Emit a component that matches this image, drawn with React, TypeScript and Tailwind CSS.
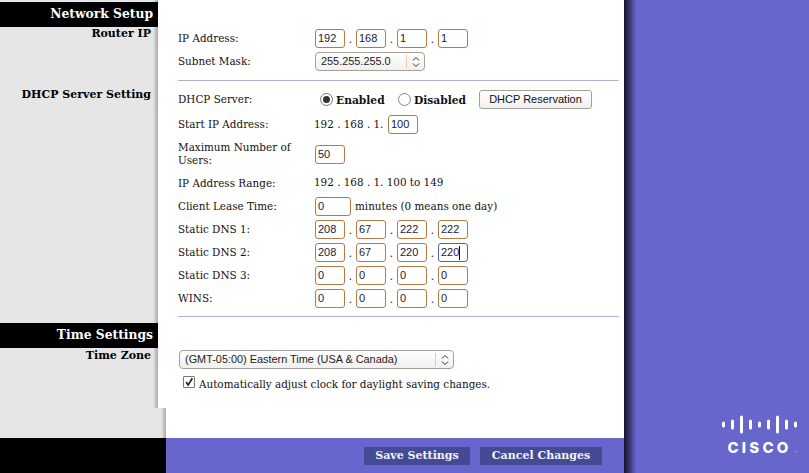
const serif = "font-['DejaVu_Serif',serif]";

function Ip({ v, focus, w = "w-[30px]" }: { v: string; focus?: boolean; w?: string }) {
  return (
    <span
      className={`relative flex h-[19px] ${w} shrink-0 items-center rounded-[3px] border bg-white pl-[2px] font-['Liberation_Sans',sans-serif] text-[11px] text-[#1a1a3a] ${focus ? "border-[#4a6a9c]" : "border-[#b87a45]"}`}
    >
      {v}
      {focus && <span className="h-[14px] w-px bg-black" />}
    </span>
  );
}

function Quad({ vals, focusLast }: { vals: string[]; focusLast?: boolean }) {
  return (
    <div className="flex items-center">
      {vals.map((v, i) => (
        <div key={i} className="flex items-center">
          {i > 0 && <span className="w-[11px] pt-[3px] text-center">.</span>}
          <Ip v={v} focus={focusLast && i === 3} />
        </div>
      ))}
    </div>
  );
}

function Row({ label, h = "h-[23px]", children }: { label: React.ReactNode; h?: string; children?: React.ReactNode }) {
  return (
    <div className={`flex ${h} items-center`}>
      <div className="w-[136px] shrink-0 pr-[12px] leading-[13px]">{label}</div>
      <div className="flex items-center pl-px">{children}</div>
    </div>
  );
}

function Chevrons() {
  return (
    <svg width="8" height="12" viewBox="0 0 8 12" fill="none" stroke="#333" strokeWidth="1">
      <path d="M1 4.5 4 1.5 7 4.5M1 7.5 4 10.5 7 7.5" />
    </svg>
  );
}

function Select({ text, w, textW }: { text: string; w: string; textW: string }) {
  return (
    <div className={`flex h-[19px] ${w} items-center rounded-[4px] border border-[#a89f97] bg-gradient-to-b from-white to-[#f0f0f0] font-['Liberation_Sans',sans-serif] text-[10.9px] text-[#222]`}>
      <span className={`${textW} shrink-0 pl-[5px] whitespace-nowrap`}>{text}</span>
      <span className="h-[13px] w-px bg-[#f2c9a0]" />
      <span className="flex flex-1 justify-center">
        <Chevrons />
      </span>
    </div>
  );
}

function SectionHead({ text }: { text: string }) {
  return (
    <div className="flex h-[25px] items-center justify-end bg-black pr-[5px] text-[12.3px] font-bold text-white">
      {text}
    </div>
  );
}

function SubHead({ text, className = "" }: { text: string; className?: string }) {
  return <div className={`pr-[7px] text-right text-[11px] font-bold leading-[13px] text-black ${className}`}>{text}</div>;
}

function Btn({ text, w }: { text: string; w: string }) {
  return (
    <div className={`flex h-[18px] ${w} items-center justify-center bg-[#444a94] text-[11px] font-bold text-[#f2f2f8]`}>
      {text}
    </div>
  );
}

function Cisco() {
  const bars = [
    [0, 6],
    [9, 10],
    [18, 18],
    [27, 10],
    [36, 6],
    [45, 10],
    [54, 18],
    [63, 10],
    [72, 6],
  ];
  return (
    <div className="flex flex-col items-center">
      <svg width="75" height="19" viewBox="0 0 75 19" fill="#fff">
        {bars.map(([x, h]) => (
          <rect key={x} x={x} y={(19 - h) / 2} width="3" height={h} rx="1.5" />
        ))}
      </svg>
      <div className="relative mt-[8px] font-['Inter',sans-serif] text-[15px] leading-[11px] font-extrabold tracking-[3.2px] text-white">
        CISCO
        <span className="absolute right-[-5px] bottom-[1px] h-px w-px bg-[#c8c8ee]" />
      </div>
    </div>
  );
}

export default function App() {
  return (
    <div className={`flex h-[473px] w-[809px] overflow-hidden bg-[#6666cc] ${serif} text-[10.4px] text-[#111]`}>
      <div className="flex w-[624px] shrink-0 flex-col">
        <div className="flex h-[408px] shrink-0">
          <div className="relative w-[158px] shrink-0 bg-[#e6e6e6] pt-[2px]">
            <div className="absolute top-0 right-0 bottom-0 w-[5px] bg-gradient-to-r from-transparent to-[#a8a8a8]" />
            <div className="relative">
              <SectionHead text="Network Setup" />
              <SubHead text="Router IP" />
              <SubHead text="DHCP Server Setting" className="mt-[48px]" />
              <div className="mt-[222px]">
                <SectionHead text="Time Settings" />
              </div>
              <SubHead text="Time Zone" className="pt-px" />
            </div>
          </div>
          <div className="min-w-0 flex-1 bg-white pt-[27px] pr-[5px] pl-[20px]">
            <Row label="IP Address:">
              <Quad vals={["192", "168", "1", "1"]} />
            </Row>
            <Row label="Subnet Mask:">
              <Select text="255.255.255.0" w="w-[110px]" textW="w-[90px]" />
            </Row>
            <div className="mt-[7px] mb-[6px] h-px w-[441px] bg-[#b3b3d9]" />
            <Row label="DHCP Server:" h="h-[25px]">
              <div className="flex items-center">
                <span className="ml-[5px] flex h-[13px] w-[13px] items-center justify-center rounded-full border border-[#777] bg-white">
                  <span className="h-[7px] w-[7px] rounded-full bg-[#333]" />
                </span>
                <span className="ml-[3px] w-[49px] pt-[3px] text-[10.7px] font-bold">Enabled</span>
                <span className="ml-[13px] h-[13px] w-[13px] rounded-full border border-[#888] bg-white" />
                <span className="ml-[3px] w-[51px] pt-[3px] text-[10.7px] font-bold">Disabled</span>
                <span className="ml-[14px] flex h-[19px] w-[113px] items-center justify-center rounded-[3px] border border-[#a89f97] bg-gradient-to-b from-white to-[#f0f0f0] font-['Liberation_Sans',sans-serif] text-[11px]">
                  DHCP Reservation
                </span>
              </div>
            </Row>
            <Row label="Start IP Address:" h="h-[25px]">
              <span className="-ml-px mr-[4px] w-[70px] whitespace-nowrap">192 . 168 . 1.</span>
              <Ip v="100" />
            </Row>
            <Row label="Maximum Number of Users:" h="h-[34px]">
              <Ip v="50" />
            </Row>
            <Row label="IP Address Range:" h="h-[24px]">
              <span className="-ml-px">192 . 168 . 1. 100 to 149</span>
            </Row>
            <Row label="Client Lease Time:">
              <Ip v="0" w="w-[36px]" />
              <span className="ml-[4px]">minutes (0 means one day)</span>
            </Row>
            <Row label="Static DNS 1:">
              <Quad vals={["208", "67", "222", "222"]} />
            </Row>
            <Row label="Static DNS 2:">
              <Quad vals={["208", "67", "220", "220"]} focusLast />
            </Row>
            <Row label="Static DNS 3:">
              <Quad vals={["0", "0", "0", "0"]} />
            </Row>
            <Row label="WINS:">
              <Quad vals={["0", "0", "0", "0"]} />
            </Row>
            <div className="mt-[6px] h-px w-[441px] bg-[#b3b3d9]" />
            <div className="mt-[33px] ml-px">
              <Select text="(GMT-05:00) Eastern Time (USA & Canada)" w="w-[275px]" textW="w-[255px]" />
            </div>
            <div className="mt-[7px] ml-[5px] flex items-start">
              <span className="flex h-[12px] w-[12px] items-center justify-center rounded-[1px] border border-[#777] bg-white">
                <svg width="12" height="12" viewBox="0 0 12 12" fill="none" stroke="#222" strokeWidth="2">
                  <path d="M2.5 6 5 9.5 10 1.5" />
                </svg>
              </span>
              <span className="ml-[4px] pt-[2px] leading-[13px]">Automatically adjust clock for daylight saving changes.</span>
            </div>
          </div>
        </div>
        <div className="flex h-[30px] shrink-0">
          <div className="relative w-[166px] shrink-0 bg-[#e6e6e6]">
            <div className="absolute top-0 right-0 bottom-0 w-[5px] bg-gradient-to-r from-transparent to-[#a8a8a8]" />
          </div>
          <div className="flex-1 bg-white" />
        </div>
        <div className="flex h-[35px] shrink-0">
          <div className="w-[166px] shrink-0 bg-black" />
          <div className="flex flex-1 justify-end gap-[10px] bg-[#6666cc] pt-[9px] pr-[22px]">
            <Btn text="Save Settings" w="w-[106px]" />
            <Btn text="Cancel Changes" w="w-[122px]" />
          </div>
        </div>
      </div>
      <div className="flex min-w-0 flex-1">
        <div className="w-[12px] bg-gradient-to-r from-[#14142c] to-[#6666cc]" />
        <div className="flex flex-1 items-end justify-end pr-[12px] pb-[20px]">
          <Cisco />
        </div>
      </div>
    </div>
  );
}
